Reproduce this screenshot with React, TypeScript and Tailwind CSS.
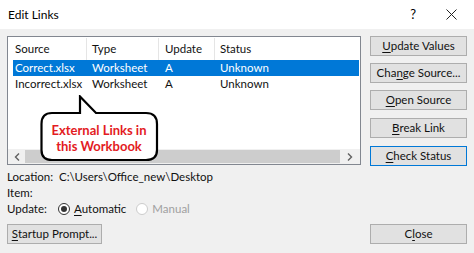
import React from "react";

const font = { fontFamily: 'Lato, "Noto Sans", sans-serif' };

function Btn({ pre, u, post, focus }: { pre?: string; u: string; post?: string; focus?: boolean }) {
  return (
    <div
      className={`flex h-[20px] w-full items-center justify-center whitespace-nowrap border bg-[#e1e1e1] text-[11.5px] text-[#111] ${
        focus ? "border-[#0078d7] border-[1.5px]" : "border-[#adadad]"
      }`}
    >
      {pre}
      <span className="underline underline-offset-2">{u}</span>
      {post}
    </div>
  );
}

function Row({ cells, selected }: { cells: string[]; selected?: boolean }) {
  return (
    <div className={`flex h-[16px] items-center whitespace-nowrap text-[11.5px] ${selected ? "bg-[#0078d7] text-white" : "text-[#111]"}`}>
      <div className="w-[73px] pl-[2px]">{cells[0]}</div>
      <div className="w-[72px] pl-[6px]">{cells[1]}</div>
      <div className="w-[56px] pl-[7px]">{cells[2]}</div>
      <div className="flex-1 pl-[6px]">{cells[3]}</div>
    </div>
  );
}

export default function App() {
  return (
    <div className="relative flex h-[253px] w-[474px] flex-col overflow-hidden bg-[#f0f0f0]" style={font}>
      <div className="flex h-[29px] items-center bg-white pl-[8px] text-[12px] text-black">
        <span>Edit Links</span>
        <span className="ml-auto mr-[30px] text-[13px]">?</span>
        <svg width="11" height="11" viewBox="0 0 11 11" className="mr-[17px]">
          <path d="M0.5 0.5 L10.5 10.5 M10.5 0.5 L0.5 10.5" stroke="#222" strokeWidth="1" />
        </svg>
      </div>

      <div className="flex flex-1 gap-[9px] px-[7px] pt-[7px]">
        <div className="flex w-[354px] flex-col">
          <div className="flex h-[129px] flex-col border border-[#828790] bg-white">
            <div className="mt-[1px] flex h-[22px] items-center pl-[5px] text-[11.5px] text-[#111]">
              <div className="w-[73px] pl-[2px]">Source</div>
              <div className="h-full w-[72px] border-l border-[#e5e5e5] pl-[5px] leading-[22px]">Type</div>
              <div className="h-full w-[56px] border-l border-[#e5e5e5] pl-[6px] leading-[22px]">Update</div>
              <div className="h-full flex-1 border-l border-[#e5e5e5] pl-[5px] leading-[22px]">Status</div>
            </div>
            <div className="pl-[5px] pr-[1px]">
              <Row cells={["Correct.xlsx", "Worksheet", "A", "Unknown"]} selected />
              <Row cells={["Incorrect.xlsx", "Worksheet", "A", "Unknown"]} />
            </div>
            <div className="mt-auto flex h-[15px] items-center bg-[#f0f0f0] text-[#606060]">
              <div className="flex w-[17px] justify-center">
                <svg width="6" height="8" viewBox="0 0 6 8"><path d="M5 0.5 L1.5 4 L5 7.5" stroke="#606060" strokeWidth="1.4" fill="none" /></svg>
              </div>
              <div className="h-[13px] flex-1 bg-[#cdcdcd]" />
              <div className="flex w-[20px] justify-center">
                <svg width="6" height="8" viewBox="0 0 6 8"><path d="M1 0.5 L4.5 4 L1 7.5" stroke="#606060" strokeWidth="1.4" fill="none" /></svg>
              </div>
            </div>
          </div>

          <div className="mt-[4px] flex flex-col whitespace-nowrap text-[11.5px] text-[#111]">
            <div className="flex h-[15.5px] items-center">
              <span className="w-[52px]">Location:</span>
              <span>C:\Users\Office_new\Desktop</span>
            </div>
            <div className="flex h-[15.5px] items-center">Item:</div>
            <div className="flex h-[17px] items-center">
              <span className="w-[51px]">Update:</span>
              <span className="flex h-[12px] w-[12px] items-center justify-center rounded-full border border-[#333] bg-white">
                <span className="h-[6px] w-[6px] rounded-full bg-[#333]" />
              </span>
              <span className="ml-[4px]">
                <span className="underline underline-offset-2">A</span>utomatic
              </span>
              <span className="ml-[10px] h-[12px] w-[12px] rounded-full border border-[#cccccc] bg-white" />
              <span className="ml-[4px] text-[#a0a0a0]">Manual</span>
            </div>
          </div>

          <div className="mt-[7px] w-[95px]">
            <Btn u="S" post="tartup Prompt..." />
          </div>
        </div>

        <div className="flex w-[97px] flex-col">
          <Btn u="U" post="pdate Values" />
          <div className="mt-[7px]"><Btn pre="Cha" u="n" post="ge Source..." /></div>
          <div className="mt-[7px]"><Btn u="O" post="pen Source" /></div>
          <div className="mt-[8px]"><Btn u="B" post="reak Link" /></div>
          <div className="mt-[8px]"><Btn u="C" post="heck Status" focus /></div>
          <div className="mt-[58px]"><Btn pre="C" u="l" post="ose" /></div>
        </div>
      </div>

      <div className="absolute left-[40px] top-[95px]">
        <svg width="120" height="68" viewBox="0 0 120 68" className="absolute left-0 top-0">
          <path
            d="M12 18 L40 18 L40 1.5 L56 18 L106 18 Q117 18 117 29 L117 55 Q117 65 106 65 L12 65 Q1.5 65 1.5 55 L1.5 29 Q1.5 18 12 18 Z"
            fill="white"
            stroke="black"
            strokeWidth="2.2"
          />
        </svg>
        <div className="relative flex h-[68px] w-[118px] flex-col items-center justify-center whitespace-nowrap pt-[17px] text-[13px] font-bold leading-[16px] text-[#e31b23]">
          <span>External Links in</span>
          <span>this Workbook</span>
        </div>
      </div>
    </div>
  );
}
